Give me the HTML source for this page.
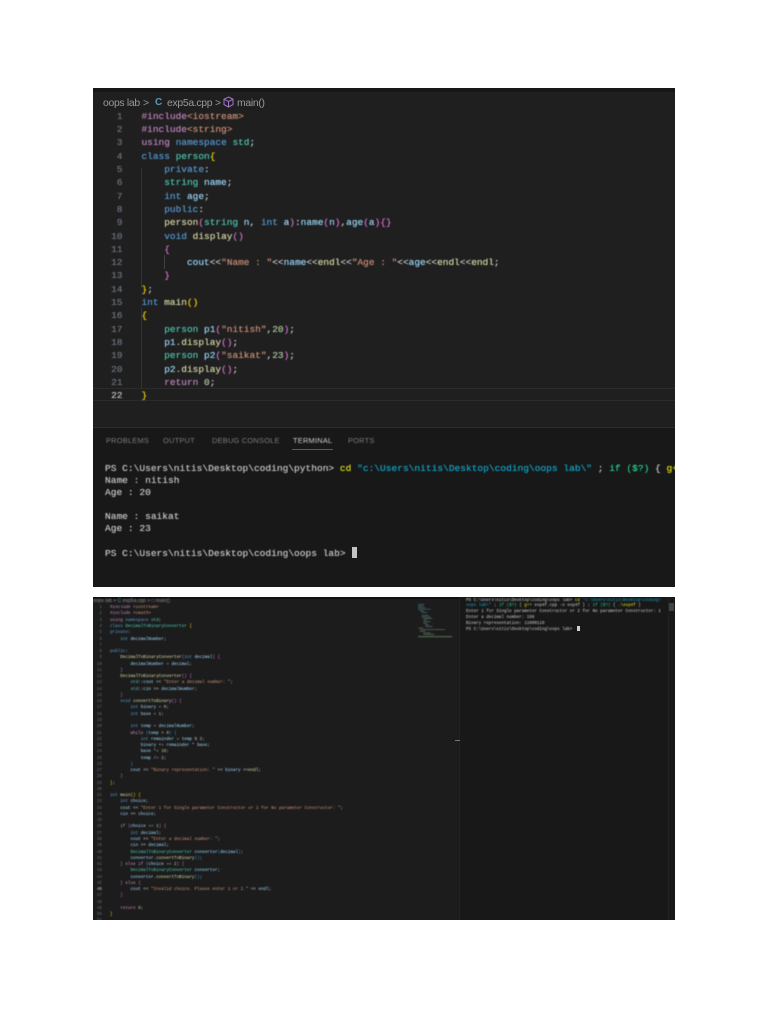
<!DOCTYPE html>
<html>
<head>
<meta charset="utf-8">
<style>
html,body{margin:0;padding:0;background:#fff;}
#root{position:relative;width:768px;height:1024px;overflow:hidden;background:#fff;font-family:"Liberation Mono",monospace;}
.abs{position:absolute;}
pre{margin:0;position:absolute;font-family:"Liberation Mono",monospace;white-space:pre;}
.panel{position:absolute;overflow:hidden;}
#p1{left:93px;top:88px;width:582px;height:499px;background:#1f1f1f;}
#p2{left:93px;top:597px;width:582px;height:323px;background:#1c1c1c;}
.big{font-size:9.47px;line-height:13.29px;color:#cccccc;filter:blur(.4px);text-shadow:0 0 .2px currentColor;}
.sm{font-size:4.28px;line-height:6.27px;color:#c8c8c8;filter:blur(.55px);}
.k{color:#569cd6}.t{color:#4ec9b0}.c{color:#c586c0}.s{color:#ce9178}.f{color:#dcdcaa}.v{color:#9cdcfe}.n{color:#b5cea8}
.y{color:#ffd700}.p{color:#da70d6}.b{color:#179fff}.w{color:#d4d4d4}
.tab{position:absolute;top:347.5px;font:7.4px/10px "Liberation Sans",sans-serif;color:#7d7d7d;letter-spacing:.25px;filter:blur(.4px);}
.crumb{position:absolute;top:9px;font:10.4px/13px "Liberation Sans",sans-serif;color:#9a9a9a;white-space:nowrap;filter:blur(.35px);letter-spacing:-.3px;}
</style>
</head>
<body>
<div id="root">

<div id="p1" class="panel">
  <div class="abs" style="left:0;top:0;width:582px;height:4px;background:#171717"></div>
  <div class="crumb" style="left:10px">oops lab</div>
  <div class="crumb" style="left:50px">&gt;</div>
  <div class="abs" style="left:62px;top:9px;font:bold 10px/12px 'Liberation Sans',sans-serif;color:#519aba;filter:blur(.35px)">C</div>
  <div class="crumb" style="left:74px">exp5a.cpp</div>
  <div class="crumb" style="left:122px">&gt;</div>
  <svg class="abs" style="left:130px;top:8px" width="11" height="12" viewBox="0 0 11 12" fill="none" stroke="#a277c9" stroke-width="1"><path d="M5.5 1 L10 3.2 V8.6 L5.5 11 L1 8.6 V3.2 Z M1 3.2 L5.5 5.6 L10 3.2 M5.5 5.6 V11"/></svg>
  <div class="crumb" style="left:144px">main()</div>

  <div class="abs" style="left:48px;top:80px;width:1px;height:120px;background:#333"></div>
  <div class="abs" style="left:70.5px;top:167px;width:1px;height:14px;background:#404040"></div>
  <div class="abs" style="left:48px;top:220px;width:1px;height:80px;background:#333"></div>
  <div class="abs" style="left:0;top:300px;width:582px;height:13px;box-sizing:border-box;border-top:1px solid #2b2b2b;border-bottom:1px solid #2b2b2b"></div>

  <pre class="big" style="left:0;top:21.9px;width:29.5px;text-align:right;color:#6e7681"> 1
 2
 3
 4
 5
 6
 7
 8
 9
10
11
12
13
14
15
16
17
18
19
20
21
<span style="color:#c6c6c6">22</span></pre>

  <pre class="big" style="left:48.5px;top:21.9px"><span class="c">#include</span><span class="s">&lt;iostream&gt;</span>
<span class="c">#include</span><span class="s">&lt;string&gt;</span>
<span class="c">using</span> <span class="k">namespace</span> <span class="t">std</span>;
<span class="k">class</span> <span class="t">person</span><span class="y">{</span>
    <span class="k">private</span>:
    <span class="t">string</span> <span class="v">name</span>;
    <span class="k">int</span> <span class="v">age</span>;
    <span class="k">public</span>:
    <span class="f">person</span><span class="p">(</span><span class="t">string</span> <span class="v">n</span>, <span class="k">int</span> <span class="v">a</span><span class="p">)</span>:<span class="v">name</span><span class="p">(</span><span class="v">n</span><span class="p">)</span>,<span class="v">age</span><span class="p">(</span><span class="v">a</span><span class="p">){}</span>
    <span class="k">void</span> <span class="f">display</span><span class="p">()</span>
    <span class="p">{</span>
        <span class="v">cout</span>&lt;&lt;<span class="s">"Name : "</span>&lt;&lt;<span class="v">name</span>&lt;&lt;<span class="f">endl</span>&lt;&lt;<span class="s">"Age : "</span>&lt;&lt;<span class="v">age</span>&lt;&lt;<span class="f">endl</span>&lt;&lt;<span class="f">endl</span>;
    <span class="p">}</span>
<span class="y">}</span>;
<span class="k">int</span> <span class="f">main</span><span class="y">()</span>
<span class="y">{</span>
    <span class="t">person</span> <span class="v">p1</span><span class="p">(</span><span class="s">"nitish"</span>,<span class="n">20</span><span class="p">)</span>;
    <span class="v">p1</span>.<span class="f">display</span><span class="p">()</span>;
    <span class="t">person</span> <span class="v">p2</span><span class="p">(</span><span class="s">"saikat"</span>,<span class="n">23</span><span class="p">)</span>;
    <span class="v">p2</span>.<span class="f">display</span><span class="p">()</span>;
    <span class="c">return</span> <span class="n">0</span>;
<span class="y">}</span></pre>

  <div class="abs" style="left:0;top:339px;width:582px;height:160px;background:#181818;border-top:1px solid #2b2b2b"></div>
  <div class="tab" style="left:13px">PROBLEMS</div>
  <div class="tab" style="left:70px">OUTPUT</div>
  <div class="tab" style="left:119px">DEBUG CONSOLE</div>
  <div class="tab" style="left:200px;color:#cfcfcf">TERMINAL</div>
  <div class="tab" style="left:255px">PORTS</div>
  <div class="abs" style="left:199px;top:361px;width:41px;height:1px;background:#1f6aa5"></div>

  <pre class="big" style="left:12px;top:374.5px;line-height:12.15px;font-size:9.55px;color:#cccccc">PS C:\Users\nitis\Desktop\coding\python&gt; <span style="color:#e5e510">cd</span> <span style="color:#11a8cd">"c:\Users\nitis\Desktop\coding\oops lab\"</span> ; <span style="color:#23d18b">if</span> <span style="color:#23d18b">($?)</span> { <span style="color:#e5e510">g++</span> exp5a.cpp -o exp5a }
Name : nitish
Age : 20

Name : saikat
Age : 23

PS C:\Users\nitis\Desktop\coding\oops lab&gt;</pre>
  <div class="abs" style="left:258.5px;top:459px;width:5px;height:11px;background:#c4c4c4"></div>
</div>

<div id="p2" class="panel">
  <div class="abs" style="left:0;top:0;width:582px;height:2px;background:#111"></div>
  <div class="abs" style="left:366px;top:0;width:216px;height:323px;background:#181818"></div>
  <div class="abs" style="left:0;top:1px;font:5px/7px 'Liberation Sans',sans-serif;color:#8a8a8a;white-space:nowrap;filter:blur(.5px)">oops lab &gt; <span style="color:#519aba">C</span> exp5a.cpp &gt; <span style="color:#b180d7">&#9633;</span> main()</div>

  <pre class="sm" style="left:0;top:8.2px;width:9px;text-align:right;color:#626a72"> 1
 2
 3
 4
 5
 6
 7
 8
 9
10
11
12
13
14
15
16
17
18
19
20
21
22
23
24
25
26
27
28
29
30
31
32
33
34
35
36
37
38
39
40
41
42
43
44
45
<span style="color:#c6c6c6">46</span>
47
48
49
50
51</pre>

  <pre class="sm" style="left:17px;top:8.2px"><span class="c">#include</span> <span class="s">&lt;iostream&gt;</span>
<span class="c">#include</span> <span class="s">&lt;cmath&gt;</span>
<span class="c">using</span> <span class="k">namespace</span> <span class="t">std</span>;
<span class="k">class</span> <span class="t">DecimalToBinaryConverter</span> <span class="y">{</span>
<span class="k">private</span>:
    <span class="k">int</span> <span class="v">decimalNumber</span>;

<span class="k">public</span>:
    <span class="f">DecimalToBinaryConverter</span><span class="p">(</span><span class="k">int</span> <span class="v">decimal</span><span class="p">)</span> <span class="p">{</span>
        <span class="v">decimalNumber</span> = <span class="v">decimal</span>;
    <span class="p">}</span>
    <span class="f">DecimalToBinaryConverter</span><span class="p">()</span> <span class="p">{</span>
        <span class="t">std</span>::<span class="v">cout</span> &lt;&lt; <span class="s">"Enter a decimal number: "</span>;
        <span class="t">std</span>::<span class="v">cin</span> &gt;&gt; <span class="v">decimalNumber</span>;
    <span class="p">}</span>
    <span class="k">void</span> <span class="f">convertToBinary</span><span class="p">()</span> <span class="p">{</span>
        <span class="k">int</span> <span class="v">binary</span> = <span class="n">0</span>;
        <span class="k">int</span> <span class="v">base</span> = <span class="n">1</span>;

        <span class="k">int</span> <span class="v">temp</span> = <span class="v">decimalNumber</span>;
        <span class="c">while</span> <span class="b">(</span><span class="v">temp</span> &gt; <span class="n">0</span><span class="b">)</span> <span class="b">{</span>
            <span class="k">int</span> <span class="v">remainder</span> = <span class="v">temp</span> % <span class="n">2</span>;
            <span class="v">binary</span> += <span class="v">remainder</span> * <span class="v">base</span>;
            <span class="v">base</span> *= <span class="n">10</span>;
            <span class="v">temp</span> /= <span class="n">2</span>;
        <span class="b">}</span>
        <span class="v">cout</span> &lt;&lt; <span class="s">"Binary representation: "</span> &lt;&lt; <span class="v">binary</span> &lt;&lt;<span class="f">endl</span>;
    <span class="p">}</span>
<span class="y">}</span>;

<span class="k">int</span> <span class="f">main</span><span class="y">()</span> <span class="y">{</span>
    <span class="k">int</span> <span class="v">choice</span>;
    <span class="v">cout</span> &lt;&lt; <span class="s">"Enter 1 for Single parameter Constructor or 2 for No parameter Constructor: "</span>;
    <span class="v">cin</span> &gt;&gt; <span class="v">choice</span>;

    <span class="c">if</span> <span class="p">(</span><span class="v">choice</span> == <span class="n">1</span><span class="p">)</span> <span class="p">{</span>
        <span class="k">int</span> <span class="v">decimal</span>;
        <span class="v">cout</span> &lt;&lt; <span class="s">"Enter a decimal number: "</span>;
        <span class="v">cin</span> &gt;&gt; <span class="v">decimal</span>;
        <span class="t">DecimalToBinaryConverter</span> <span class="v">convertor</span><span class="b">(</span><span class="v">decimal</span><span class="b">)</span>;
        <span class="v">convertor</span>.<span class="f">convertToBinary</span><span class="b">()</span>;
    <span class="p">}</span> <span class="c">else if</span> <span class="p">(</span><span class="v">choice</span> == <span class="n">2</span><span class="p">)</span> <span class="p">{</span>
        <span class="t">DecimalToBinaryConverter</span> <span class="v">convertor</span>;
        <span class="v">convertor</span>.<span class="f">convertToBinary</span><span class="b">()</span>;
    <span class="p">}</span> <span class="c">else</span> <span class="p">{</span>
        <span class="v">cout</span> &lt;&lt; <span class="s">"Invalid choice. Please enter 1 or 2."</span> &lt;&lt; <span class="v">endl</span>;
    <span class="p">}</span>

    <span class="c">return</span> <span class="n">0</span>;
<span class="y">}</span></pre>

  <svg class="abs" style="left:325px;top:6px;filter:blur(.5px);opacity:.75" width="36" height="36" viewBox="0 0 40 46" preserveAspectRatio="none" fill="none" stroke-width="1">
    <path d="M0 2H7M0 4H6M0 6H8M0 8H14" stroke="#4d7a8c"/>
    <path d="M2 10H6M4 12H10M4 16H12M4 18H14M6 20H16M6 22H10" stroke="#5a8a84"/>
    <path d="M6 24H14M6 26H10M8 28H12M8 30H16" stroke="#6d7f90"/>
    <path d="M0 32H6M2 34H30M2 36H8M6 38H14M6 40H18" stroke="#6a7d70"/>
    <path d="M0 43H38" stroke="#52734a" stroke-width="2"/>
  </svg>
  <div class="abs" style="left:366px;top:0;width:1px;height:323px;background:#222"></div>
  <div class="abs" style="left:362px;top:143px;width:5px;height:1px;background:#777"></div>

  <pre class="sm" style="left:373px;top:.5px;line-height:5.85px;font-size:4.24px;color:#cfcfcf">PS C:\Users\nitis\Desktop\coding\oops lab&gt; <span style="color:#e5e510">cd</span> <span style="color:#11a8cd">"c:\Users\nitis\Desktop\coding\</span>
<span style="color:#11a8cd">oops lab\"</span> ; <span style="color:#23d18b">if ($?)</span> { <span style="color:#e5e510">g++</span> exp4f.cpp -o exp4f } ; <span style="color:#23d18b">if ($?)</span> { <span style="color:#e5e510">.\exp4f</span> }
Enter 1 for Single parameter Constructor or 2 for No parameter Constructor: 1
Enter a decimal number: 198
Binary representation: 11000110
PS C:\Users\nitis\Desktop\coding\oops lab&gt;</pre>
  <div class="abs" style="left:483.5px;top:28.5px;width:3px;height:5px;background:#d0d0d0"></div>
  <div class="abs" style="left:575px;top:6px;width:6px;height:8px;background:#3a4450"></div>
  <div class="abs" style="left:575px;top:0;width:1px;height:323px;background:#222"></div>
</div>

</div>
</body>
</html>
